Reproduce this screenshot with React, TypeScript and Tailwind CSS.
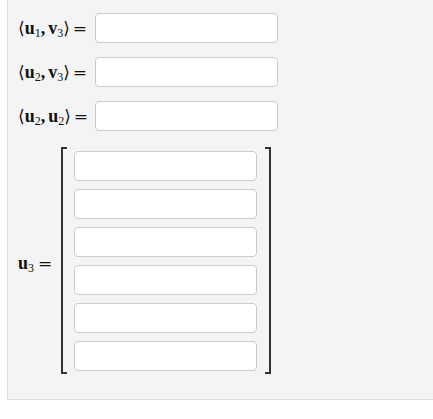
import React from "react";

const serif = { fontFamily: '"Liberation Serif", "DejaVu Serif", serif' };
const dv = { fontFamily: '"DejaVu Serif", "Liberation Serif", serif' };

function Inp({ cls = "" }: { cls?: string }) {
  return (
    <input
      type="text"
      className={`block h-[30px] bg-white border border-[#cccccc] rounded-[4px] outline-none ${cls}`}
    />
  );
}

function B({ children }: { children: React.ReactNode }) {
  return <span className="font-bold text-[18px]" style={serif}>{children}</span>;
}

function Sub({ children }: { children: React.ReactNode }) {
  return <sub className="text-[12px] relative top-[3px] align-baseline" style={serif}>{children}</sub>;
}

function Eq({ ml }: { ml: string }) {
  return <span className={`text-[17px] ${ml}`} style={dv}>=</span>;
}

function Row({ a, as, b, bs }: { a: string; as: string; b: string; bs: string }) {
  return (
    <div className="flex items-center h-[30px]">
      <div className="w-[77px] text-[#111] whitespace-nowrap leading-none">
        <span className="text-[17px] font-light" style={dv}>⟨</span>
        <B>{a}</B>
        <Sub>{as}</Sub>
        <B>,</B>
        <span className="inline-block w-[3px]" />
        <B>{b}</B>
        <Sub>{bs}</Sub>
        <span className="text-[17px] font-light" style={dv}>⟩</span>
        <Eq ml="ml-[3px]" />
      </div>
      <Inp cls="w-[183px]" />
    </div>
  );
}

export default function App() {
  return (
    <div className="w-[433px] h-[419px] bg-white overflow-hidden">
      <div className="ml-[7px] h-[400px] bg-[#f4f4f4] border-l border-b border-[#dddddd] pl-[10px] pt-[13px]">
        <div className="flex flex-col gap-[14px]">
          <Row a="u" as="1" b="v" bs="3" />
          <Row a="u" as="2" b="v" bs="3" />
          <Row a="u" as="2" b="u" bs="2" />
        </div>
        <div className="flex items-center mt-[16px]">
          <div className="w-[43px] text-[#111] whitespace-nowrap leading-none pt-[4px]">
            <B>u</B>
            <Sub>3</Sub>
            <Eq ml="ml-[4px]" />
          </div>
          <div className="w-[6px] h-[227px] border-l-2 border-y-2 border-[#333333]" />
          <div className="flex flex-col gap-[8px] ml-[7px] mr-[8px]">
            <Inp cls="w-[183px]" />
            <Inp cls="w-[183px]" />
            <Inp cls="w-[183px]" />
            <Inp cls="w-[183px]" />
            <Inp cls="w-[183px]" />
            <Inp cls="w-[183px]" />
          </div>
          <div className="w-[6px] h-[227px] border-r-2 border-y-2 border-[#333333]" />
        </div>
      </div>
    </div>
  );
}
